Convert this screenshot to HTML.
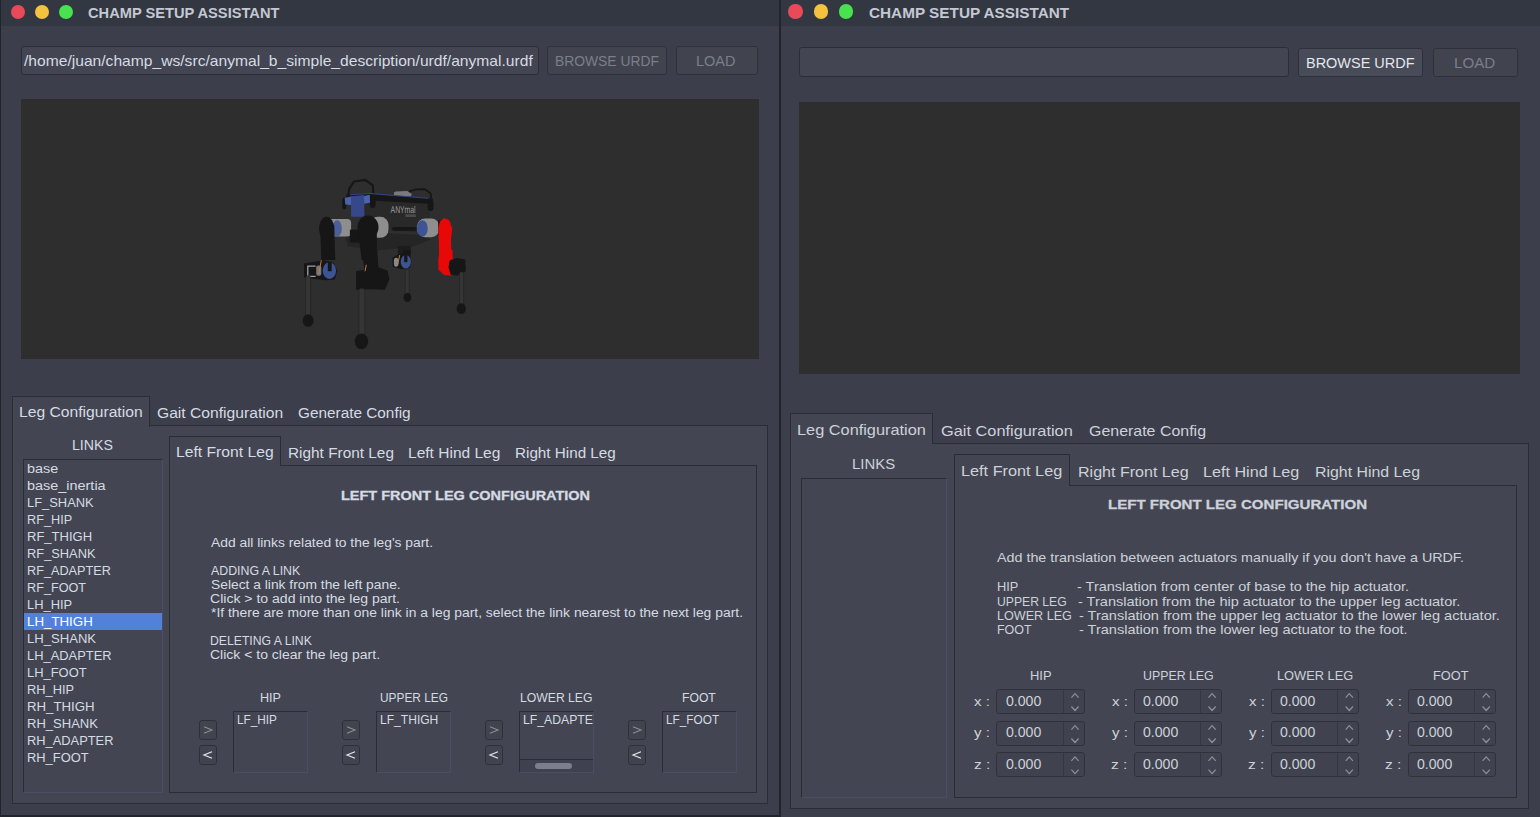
<!DOCTYPE html>
<html><head><meta charset="utf-8"><style>
html,body{margin:0;padding:0;width:1540px;height:817px;overflow:hidden;background:#22242b;}
body{position:relative;font-family:'Liberation Sans', sans-serif;}
div{position:absolute;box-sizing:border-box;}
.t{white-space:pre;transform-origin:0 0;}
</style></head><body>
<div style="left:0px;top:0px;width:779px;height:817px;background:#3c3e4b;"></div>
<div style="left:0px;top:0px;width:779px;height:26px;background:#333741;"></div>
<div style="left:0px;top:0px;width:1px;height:817px;background:#22242b;"></div>
<div style="left:0px;top:815px;width:779px;height:2px;background:#22242b;"></div>
<div style="left:11px;top:5px;width:14px;height:14px;background:#e84a5a;border-radius:50%;"></div>
<div style="left:35px;top:5px;width:14px;height:14px;background:#f3c33f;border-radius:50%;"></div>
<div style="left:59px;top:5px;width:14px;height:14px;background:#48e24f;border-radius:50%;"></div>
<div class="t" style="left:88.04px;top:6.00px;font-size:14px;line-height:14px;color:#c3c8d2;font-weight:bold;transform:scaleX(1.0456);">CHAMP SETUP ASSISTANT</div>
<div style="left:21px;top:46px;width:517.5px;height:28.5px;background:#434652;border:1px solid #2c2e37;border-radius:3px;"></div>
<div class="t" style="left:23.60px;top:53.00px;font-size:15px;line-height:15px;color:#d6dbe3;transform:scaleX(1.0413);">/home/juan/champ_ws/src/anymal_b_simple_description/urdf/anymal.urdf</div>
<div style="left:546.5px;top:46px;width:120px;height:28.5px;background:#41444f;border:1px solid #2f313a;border-radius:3px;"></div>
<div class="t" style="left:554.62px;top:54.00px;font-size:14px;line-height:14px;color:#7b7f8a;transform:scaleX(0.9889);">BROWSE URDF</div>
<div style="left:675.5px;top:46px;width:82px;height:28.5px;background:#41444f;border:1px solid #2f313a;border-radius:3px;"></div>
<div class="t" style="left:696.37px;top:54.00px;font-size:14px;line-height:14px;color:#7b7f8a;transform:scaleX(1.0316);">LOAD</div>
<div style="left:21px;top:99px;width:738px;height:260px;background:#2e2e2e;"></div>
<svg style="position:absolute;left:0;top:0" width="780" height="400" viewBox="0 0 780 400"><path d="M348.2 195.1 L349.3 188.7 L354.0 181.5 L365.1 179.9 L372.7 185.2 L373.5 194.0" fill="none" stroke="#161616" stroke-width="2.2" stroke-linejoin="round"/><path d="M407.8 195.5 L410.1 191.0 L416.0 189.3 L424.7 189.1 L430.6 193.4 L431.2 198.1" fill="none" stroke="#161616" stroke-width="1.8" stroke-linejoin="round"/><polygon points="393.8,192.8 395.5,191.6 407.2,191.0 411.9,194.0 410.7,196.9 394.3,196.3" fill="#7a7a7a" /><polygon points="344.1,230.8 429.4,235.5 429.4,240.1 411.9,247.1 376.8,250.6 347.6,246.0" fill="#252525" /><polygon points="365.1,196.3 429.4,199.8 429.4,230.8 416.6,231.9 365.1,228.4" fill="#292929" /><polygon points="346.4,194.5 369.8,193.4 432.9,198.6 432.9,203.9 369.8,200.6 346.4,199.5" fill="#161616" /><path d="M349.9 194.8 L369.8 193.5 L428.2 198.3" fill="none" stroke="#34467e" stroke-width="1.0" stroke-linejoin="round"/><rect x="342.3" y="197.5" width="4.1" height="11.7" rx="3" fill="#161616" /><rect x="369.8" y="196.3" width="5.8" height="11.7" rx="3" fill="#161616" /><rect x="427.7" y="199.8" width="5.8" height="11.1" rx="3" fill="#161616" /><polygon points="344.7,198.1 351.1,196.6 351.1,205.1 345.3,204.5" fill="#4a63ab" /><polygon points="364.0,195.9 369.8,194.8 370.0,202.7 364.0,203.7" fill="#4a63ab" /><polygon points="350.9,196.3 364.2,195.1 364.2,216.8 351.1,216.8" fill="#37488a" /><text x="390.6" y="212.7" font-family="Liberation Sans" font-size="10" fill="#9c9c9c" textLength="25" lengthAdjust="spacingAndGlyphs" style="text-rendering:geometricPrecision">ANYmal</text><rect x="405.4" y="214.2" width="10.5" height="2.8" rx="0" fill="#4a4a4a" /><rect x="392.0" y="227.0" width="24.5" height="3.7" rx="2" fill="#161616" /><rect x="325.4" y="219.1" width="25.7" height="17.5" rx="4" fill="#8e8e8e" /><rect x="349.9" y="229.6" width="10.5" height="12.9" rx="0" fill="#161616" /><ellipse cx="337.1" cy="228.4" rx="4.7" ry="8.2" fill="#4b5f9a" /><ellipse cx="326.6" cy="228.4" rx="7.6" ry="11.7" fill="#161616" /><rect x="369.8" y="216.8" width="18.7" height="21.0" rx="8" fill="#8e8e8e" /><ellipse cx="368.0" cy="227.3" rx="10.5" ry="11.7" fill="#161616" /><rect x="417.1" y="218.5" width="22.2" height="18.7" rx="8" fill="#8e8e8e" /><rect x="438.2" y="220.3" width="4.1" height="15.2" rx="0" fill="#161616" /><ellipse cx="422.4" cy="228.4" rx="5.3" ry="8.2" fill="#3c5494" /><polygon points="320.1,224.9 334.2,224.9 335.3,260.0 321.3,260.0" fill="#161616" /><polygon points="358.7,235.5 376.8,233.1 376.8,260.0 361.6,260.0" fill="#161616" /><polygon points="397.9,246.0 410.7,246.0 410.7,260.0 397.9,260.0" fill="#1c1c1c" /><polygon points="439.9,221.4 444.0,217.9 449.3,220.3 452.2,228.4 451.0,240.1 451.6,260.0 439.3,260.0 438.8,240.1 438.2,228.4" fill="#e80808" /><polygon points="304.0,263.5 323.3,260.3 333.5,262.8 337.4,270.6 334.8,279.6 324.6,280.2 304.0,277.6" fill="#161616" /><path d="M315.6 266.1 L307.8 266.1 L307.8 276.3 L315.6 276.3" fill="none" stroke="#a0a0a0" stroke-width="1.3" stroke-linejoin="round"/><rect x="316.2" y="265.4" width="5.1" height="10.3" rx="2" fill="#777777" /><ellipse cx="329.4" cy="270.6" rx="6.7" ry="8.4" fill="#3c5494" /><rect x="327.8" y="261.6" width="3.9" height="9.6" rx="0" fill="#161616" /><polygon points="361.8,250.0 377.2,250.0 378.5,268.0 364.4,270.6" fill="#161616" /><polygon points="356.0,271.2 367.0,269.3 378.5,267.3 387.5,270.6 389.4,279.6 384.9,289.8 372.1,289.2 356.0,289.8" fill="#161616" /><polygon points="392.6,257.7 399.1,253.9 408.1,254.5 411.3,261.6 410.0,268.0 401.6,269.3 392.6,266.7" fill="#161616" /><ellipse cx="405.8" cy="261.8" rx="5.1" ry="6.7" fill="#3c5494" /><rect x="404.2" y="255.1" width="3.2" height="7.1" rx="0" fill="#161616" /><rect x="393.9" y="257.7" width="4.5" height="9.0" rx="3" fill="#8a8a8a" /><rect x="402.9" y="250.0" width="7.7" height="5.1" rx="0" fill="#161616" /><polygon points="439.5,250.0 452.4,250.0 453.0,261.6 451.1,275.7 444.0,275.1 438.3,269.3 438.3,260.3" fill="#e80808" /><polygon points="449.8,260.3 456.9,258.0 465.2,259.6 465.9,271.2 456.9,275.7 450.5,274.4 448.5,266.7" fill="#161616" /><rect x="305.5" y="275.7" width="5.1" height="41.1" rx="2" fill="#353535" stroke="#222" stroke-width="0.6"/><rect x="358.9" y="288.5" width="5.9" height="47.5" rx="2" fill="#353535" stroke="#222" stroke-width="0.6"/><rect x="405.2" y="269.3" width="3.9" height="25.1" rx="2" fill="#353535" stroke="#222" stroke-width="0.6"/><rect x="459.5" y="271.8" width="4.1" height="33.4" rx="2" fill="#353535" stroke="#222" stroke-width="0.6"/><rect x="302.7" y="314.2" width="10.9" height="12.6" rx="30" fill="#161616" /><rect x="354.7" y="333.5" width="13.5" height="15.7" rx="35" fill="#161616" /><rect x="403.6" y="293.0" width="7.7" height="9.0" rx="20" fill="#161616" /><rect x="456.6" y="303.3" width="9.3" height="10.7" rx="22" fill="#161616" /><path d="M318.8 273.8 L321.3 260.3" fill="none" stroke="#c27a3e" stroke-width="1" stroke-linejoin="round"/><path d="M365.0 271.2 L366.3 264.8" fill="none" stroke="#c27a3e" stroke-width="1" stroke-linejoin="round"/><path d="M397.8 264.1 L399.7 255.1" fill="none" stroke="#c27a3e" stroke-width="1" stroke-linejoin="round"/></svg>
<div style="left:12px;top:425px;width:756px;height:379px;background:#434652;border:1px solid #2b2d35;"></div>
<div style="left:12px;top:396px;width:138px;height:31px;background:#434652;border:1px solid #2b2d35;border-bottom:none;"></div>
<div class="t" style="left:18.98px;top:405.00px;font-size:14px;line-height:14px;color:#d6dbe3;transform:scaleX(1.1183);">Leg Configuration</div>
<div class="t" style="left:157.37px;top:406.00px;font-size:14px;line-height:14px;color:#d6dbe3;transform:scaleX(1.1176);">Gait Configuration</div>
<div class="t" style="left:298.08px;top:406.00px;font-size:14px;line-height:14px;color:#d6dbe3;transform:scaleX(1.0959);">Generate Config</div>
<div class="t" style="left:72.29px;top:438.00px;font-size:14px;line-height:14px;color:#d6dbe3;transform:scaleX(1.0108);">LINKS</div>
<div style="left:23px;top:459px;width:140px;height:334px;background:#434652;border-top:1px solid #2b2d35;border-left:1px solid #2b2d35;border-right:1px solid #4a4e64;border-bottom:1px solid #4a4e64;"></div>
<div style="left:24px;top:613px;width:138px;height:17px;background:#5181d8;"></div>
<div class="t" style="left:27.10px;top:463.00px;font-size:12.5px;line-height:12.5px;color:#d6dbe3;transform:scaleX(1.1542);">base</div>
<div class="t" style="left:27.10px;top:480.00px;font-size:12.5px;line-height:12.5px;color:#d6dbe3;transform:scaleX(1.1543);">base_inertia</div>
<div class="t" style="left:26.99px;top:497.00px;font-size:12.5px;line-height:12.5px;color:#d6dbe3;transform:scaleX(1.0316);">LF_SHANK</div>
<div class="t" style="left:27.01px;top:514.00px;font-size:12.5px;line-height:12.5px;color:#d6dbe3;transform:scaleX(1.0151);">RF_HIP</div>
<div class="t" style="left:26.98px;top:531.00px;font-size:12.5px;line-height:12.5px;color:#d6dbe3;transform:scaleX(1.0413);">RF_THIGH</div>
<div class="t" style="left:27.00px;top:548.00px;font-size:12.5px;line-height:12.5px;color:#d6dbe3;transform:scaleX(1.0279);">RF_SHANK</div>
<div class="t" style="left:27.01px;top:565.00px;font-size:12.5px;line-height:12.5px;color:#d6dbe3;transform:scaleX(1.0155);">RF_ADAPTER</div>
<div class="t" style="left:27.01px;top:582.00px;font-size:12.5px;line-height:12.5px;color:#d6dbe3;transform:scaleX(1.0133);">RF_FOOT</div>
<div class="t" style="left:26.99px;top:599.00px;font-size:12.5px;line-height:12.5px;color:#d6dbe3;transform:scaleX(1.0315);">LH_HIP</div>
<div class="t" style="left:26.96px;top:616.00px;font-size:12.5px;line-height:12.5px;color:#ffffff;transform:scaleX(1.0632);">LH_THIGH</div>
<div class="t" style="left:26.98px;top:633.00px;font-size:12.5px;line-height:12.5px;color:#d6dbe3;transform:scaleX(1.0464);">LH_SHANK</div>
<div class="t" style="left:26.99px;top:650.00px;font-size:12.5px;line-height:12.5px;color:#d6dbe3;transform:scaleX(1.0315);">LH_ADAPTER</div>
<div class="t" style="left:26.99px;top:667.00px;font-size:12.5px;line-height:12.5px;color:#d6dbe3;transform:scaleX(1.0344);">LH_FOOT</div>
<div class="t" style="left:27.00px;top:684.00px;font-size:12.5px;line-height:12.5px;color:#d6dbe3;transform:scaleX(1.0261);">RH_HIP</div>
<div class="t" style="left:26.97px;top:701.00px;font-size:12.5px;line-height:12.5px;color:#d6dbe3;transform:scaleX(1.0582);">RH_THIGH</div>
<div class="t" style="left:26.98px;top:718.00px;font-size:12.5px;line-height:12.5px;color:#d6dbe3;transform:scaleX(1.0424);">RH_SHANK</div>
<div class="t" style="left:27.00px;top:735.00px;font-size:12.5px;line-height:12.5px;color:#d6dbe3;transform:scaleX(1.0286);">RH_ADAPTER</div>
<div class="t" style="left:26.99px;top:752.00px;font-size:12.5px;line-height:12.5px;color:#d6dbe3;transform:scaleX(1.0302);">RH_FOOT</div>
<div style="left:169px;top:465px;width:588px;height:328px;background:#434652;border:1px solid #2b2d35;"></div>
<div style="left:169px;top:436px;width:112px;height:30px;background:#434652;border:1px solid #2b2d35;border-bottom:none;"></div>
<div class="t" style="left:175.78px;top:445.00px;font-size:14px;line-height:14px;color:#d6dbe3;transform:scaleX(1.1198);">Left Front Leg</div>
<div class="t" style="left:287.80px;top:446.00px;font-size:14px;line-height:14px;color:#d6dbe3;transform:scaleX(1.0981);">Right Front Leg</div>
<div class="t" style="left:407.89px;top:446.00px;font-size:14px;line-height:14px;color:#d6dbe3;transform:scaleX(1.1093);">Left Hind Leg</div>
<div class="t" style="left:514.81px;top:446.00px;font-size:14px;line-height:14px;color:#d6dbe3;transform:scaleX(1.0878);">Right Hind Leg</div>
<div class="t" style="left:340.70px;top:489.00px;font-size:13px;line-height:13px;color:#d6dbe3;font-weight:bold;-webkit-text-stroke:0.3px #d6dbe3;transform:scaleX(1.1137);">LEFT FRONT LEG CONFIGURATION</div>
<div class="t" style="left:211.00px;top:537.00px;font-size:12.5px;line-height:12.5px;color:#d6dbe3;transform:scaleX(1.1080);">Add all links related to the leg's part.</div>
<div class="t" style="left:211.00px;top:565.00px;font-size:12.5px;line-height:12.5px;color:#d6dbe3;transform:scaleX(0.9885);">ADDING A LINK</div>
<div class="t" style="left:210.57px;top:579.00px;font-size:12.5px;line-height:12.5px;color:#d6dbe3;transform:scaleX(1.1052);">Select a link from the left pane.</div>
<div class="t" style="left:210.34px;top:593.00px;font-size:12.5px;line-height:12.5px;color:#d6dbe3;transform:scaleX(1.1231);">Click &gt; to add into the leg part.</div>
<div class="t" style="left:210.78px;top:607.00px;font-size:12.5px;line-height:12.5px;color:#d6dbe3;transform:scaleX(1.1112);">*If there are more than one link in a leg part, select the link nearest to the next leg part.</div>
<div class="t" style="left:210.05px;top:635.00px;font-size:12.5px;line-height:12.5px;color:#d6dbe3;transform:scaleX(0.9773);">DELETING A LINK</div>
<div class="t" style="left:210.34px;top:649.00px;font-size:12.5px;line-height:12.5px;color:#d6dbe3;transform:scaleX(1.1200);">Click &lt; to clear the leg part.</div>
<div class="t" style="left:259.82px;top:692.00px;font-size:12.5px;line-height:12.5px;color:#d6dbe3;transform:scaleX(1.0085);">HIP</div>
<div style="left:233px;top:711px;width:75px;height:62px;background:#434652;border-top:1px solid #2b2d35;border-left:1px solid #2b2d35;border-right:1px solid #4a4e64;border-bottom:1px solid #4a4e64;overflow:hidden;"></div>
<div style="left:234px;top:712px;width:73px;height:46px;overflow:hidden"><div class="t" style="left:3.28px;top:2.00px;font-size:12.5px;line-height:12.5px;color:#d6dbe3;transform:scaleX(0.9419);">LF_HIP</div></div>
<div style="left:199px;top:720px;width:18px;height:20px;background:#41444f;border:1px solid #2f313a;border-radius:3px;"></div>
<div style="left:199px;top:745px;width:18px;height:20px;background:#41444f;border:1px solid #2f313a;border-radius:3px;"></div>
<svg style="position:absolute;left:199px;top:720px" width="18" height="45" viewBox="0 0 18 45"><path d="M5 6.7 L13 10 L5 13.3" fill="none" stroke="#8a8e98" stroke-width="1.1"/><path d="M13 31.7 L5 35 L13 38.3" fill="none" stroke="#e6e9ee" stroke-width="1.2"/></svg>
<div class="t" style="left:379.56px;top:692.00px;font-size:12.5px;line-height:12.5px;color:#d6dbe3;transform:scaleX(0.9494);">UPPER LEG</div>
<div style="left:376px;top:711px;width:75px;height:62px;background:#434652;border-top:1px solid #2b2d35;border-left:1px solid #2b2d35;border-right:1px solid #4a4e64;border-bottom:1px solid #4a4e64;overflow:hidden;"></div>
<div style="left:377px;top:712px;width:73px;height:46px;overflow:hidden"><div class="t" style="left:3.26px;top:2.00px;font-size:12.5px;line-height:12.5px;color:#d6dbe3;transform:scaleX(0.9653);">LF_THIGH</div></div>
<div style="left:342px;top:720px;width:18px;height:20px;background:#41444f;border:1px solid #2f313a;border-radius:3px;"></div>
<div style="left:342px;top:745px;width:18px;height:20px;background:#41444f;border:1px solid #2f313a;border-radius:3px;"></div>
<svg style="position:absolute;left:342px;top:720px" width="18" height="45" viewBox="0 0 18 45"><path d="M5 6.7 L13 10 L5 13.3" fill="none" stroke="#8a8e98" stroke-width="1.1"/><path d="M13 31.7 L5 35 L13 38.3" fill="none" stroke="#e6e9ee" stroke-width="1.2"/></svg>
<div class="t" style="left:520.15px;top:692.00px;font-size:12.5px;line-height:12.5px;color:#d6dbe3;transform:scaleX(0.9750);">LOWER LEG</div>
<div style="left:519px;top:711px;width:75px;height:62px;background:#434652;border-top:1px solid #2b2d35;border-left:1px solid #2b2d35;border-right:1px solid #4a4e64;border-bottom:1px solid #4a4e64;overflow:hidden;"></div>
<div style="left:520px;top:712px;width:73px;height:46px;overflow:hidden"><div class="t" style="left:3.25px;top:2.00px;font-size:12.5px;line-height:12.5px;color:#d6dbe3;transform:scaleX(0.9764);">LF_ADAPTER</div></div>
<div style="left:485px;top:720px;width:18px;height:20px;background:#41444f;border:1px solid #2f313a;border-radius:3px;"></div>
<div style="left:485px;top:745px;width:18px;height:20px;background:#41444f;border:1px solid #2f313a;border-radius:3px;"></div>
<svg style="position:absolute;left:485px;top:720px" width="18" height="45" viewBox="0 0 18 45"><path d="M5 6.7 L13 10 L5 13.3" fill="none" stroke="#8a8e98" stroke-width="1.1"/><path d="M13 31.7 L5 35 L13 38.3" fill="none" stroke="#e6e9ee" stroke-width="1.2"/></svg>
<div class="t" style="left:682.35px;top:692.00px;font-size:12.5px;line-height:12.5px;color:#d6dbe3;transform:scaleX(0.9724);">FOOT</div>
<div style="left:662px;top:711px;width:75px;height:62px;background:#434652;border-top:1px solid #2b2d35;border-left:1px solid #2b2d35;border-right:1px solid #4a4e64;border-bottom:1px solid #4a4e64;overflow:hidden;"></div>
<div style="left:663px;top:712px;width:73px;height:46px;overflow:hidden"><div class="t" style="left:3.28px;top:2.00px;font-size:12.5px;line-height:12.5px;color:#d6dbe3;transform:scaleX(0.9443);">LF_FOOT</div></div>
<div style="left:628px;top:720px;width:18px;height:20px;background:#41444f;border:1px solid #2f313a;border-radius:3px;"></div>
<div style="left:628px;top:745px;width:18px;height:20px;background:#41444f;border:1px solid #2f313a;border-radius:3px;"></div>
<svg style="position:absolute;left:628px;top:720px" width="18" height="45" viewBox="0 0 18 45"><path d="M5 6.7 L13 10 L5 13.3" fill="none" stroke="#8a8e98" stroke-width="1.1"/><path d="M13 31.7 L5 35 L13 38.3" fill="none" stroke="#e6e9ee" stroke-width="1.2"/></svg>
<div style="left:520px;top:759px;width:73px;height:13px;background:#3f424e;border-top:1px solid #2b2d35;"></div>
<div style="left:534.6px;top:763px;width:37.7px;height:6px;background:#7b7f8b;border-radius:3px;"></div>
<div style="left:779px;top:0px;width:2px;height:817px;background:#22242b;"></div>
<div style="left:781px;top:0px;width:759px;height:817px;background:#3c3e4b;"></div>
<div style="left:781px;top:0px;width:759px;height:26px;background:#333741;"></div>
<div style="left:788.35px;top:4.4px;width:14.5px;height:14.5px;background:#e84a5a;border-radius:50%;"></div>
<div style="left:813.75px;top:4.4px;width:14.5px;height:14.5px;background:#f3c33f;border-radius:50%;"></div>
<div style="left:838.55px;top:4.4px;width:14.5px;height:14.5px;background:#48e24f;border-radius:50%;"></div>
<div class="t" style="left:868.92px;top:6.00px;font-size:14.6px;line-height:14.6px;color:#c3c8d2;font-weight:bold;transform:scaleX(1.0491);">CHAMP SETUP ASSISTANT</div>
<div style="left:799px;top:47px;width:490px;height:29.5px;background:#434652;border:1px solid #2c2e37;border-radius:3px;"></div>
<div style="left:1297.5px;top:47.5px;width:125px;height:29px;background:#484b58;border:1px solid #2f313a;border-radius:3px;"></div>
<div class="t" style="left:1305.67px;top:56.00px;font-size:14.6px;line-height:14.6px;color:#e3e7ee;transform:scaleX(0.9918);">BROWSE URDF</div>
<div style="left:1432.5px;top:47.5px;width:85px;height:29px;background:#41444f;border:1px solid #2f313a;border-radius:3px;"></div>
<div class="t" style="left:1454.32px;top:56.00px;font-size:14.6px;line-height:14.6px;color:#7b7f8a;transform:scaleX(1.0364);">LOAD</div>
<div style="left:799px;top:102px;width:721px;height:272px;background:#2e2e2e;"></div>
<div style="left:790px;top:443px;width:739px;height:366px;background:#434652;border:1px solid #2b2d35;"></div>
<div style="left:790px;top:413.4px;width:143.4px;height:31px;background:#434652;border:1px solid #2b2d35;border-bottom:none;"></div>
<div class="t" style="left:797.12px;top:423.00px;font-size:14.6px;line-height:14.6px;color:#cdd1d9;transform:scaleX(1.1183);">Leg Configuration</div>
<div class="t" style="left:941.43px;top:424.00px;font-size:14.6px;line-height:14.6px;color:#cdd1d9;transform:scaleX(1.1199);">Gait Configuration</div>
<div class="t" style="left:1088.65px;top:424.00px;font-size:14.6px;line-height:14.6px;color:#cdd1d9;transform:scaleX(1.0925);">Generate Config</div>
<div class="t" style="left:852.34px;top:457.00px;font-size:14.6px;line-height:14.6px;color:#cdd1d9;transform:scaleX(1.0212);">LINKS</div>
<div style="left:801px;top:478px;width:146px;height:320px;background:#434652;border-top:1px solid #2b2d35;border-left:1px solid #2b2d35;border-right:1px solid #4a4e64;border-bottom:1px solid #4a4e64;"></div>
<div style="left:953.6px;top:485px;width:563.4px;height:312.5px;background:#434652;border:1px solid #2b2d35;"></div>
<div style="left:953.9px;top:453.5px;width:115.8px;height:32.5px;background:#434652;border:1px solid #2b2d35;border-bottom:none;"></div>
<div class="t" style="left:960.93px;top:464.00px;font-size:14.6px;line-height:14.6px;color:#cdd1d9;transform:scaleX(1.1142);">Left Front Leg</div>
<div class="t" style="left:1077.75px;top:465.00px;font-size:14.6px;line-height:14.6px;color:#cdd1d9;transform:scaleX(1.0996);">Right Front Leg</div>
<div class="t" style="left:1203.24px;top:465.00px;font-size:14.6px;line-height:14.6px;color:#cdd1d9;transform:scaleX(1.1073);">Left Hind Leg</div>
<div class="t" style="left:1314.76px;top:465.00px;font-size:14.6px;line-height:14.6px;color:#cdd1d9;transform:scaleX(1.0875);">Right Hind Leg</div>
<div class="t" style="left:1108.16px;top:498.00px;font-size:13.6px;line-height:13.6px;color:#cdd1d9;font-weight:bold;-webkit-text-stroke:0.3px #cdd1d9;transform:scaleX(1.1077);">LEFT FRONT LEG CONFIGURATION</div>
<div class="t" style="left:997.30px;top:551.00px;font-size:13px;line-height:13px;color:#cdd1d9;transform:scaleX(1.1001);">Add the translation between actuators manually if you don't have a URDF.</div>
<div class="t" style="left:997.00px;top:580.00px;font-size:13px;line-height:13px;color:#cdd1d9;transform:scaleX(0.9846);">HIP</div>
<div class="t" style="left:1076.85px;top:580.00px;font-size:13px;line-height:13px;color:#cdd1d9;transform:scaleX(1.1152);">- Translation from center of base to the hip actuator.</div>
<div class="t" style="left:997.24px;top:595.00px;font-size:13px;line-height:13px;color:#cdd1d9;transform:scaleX(0.9363);">UPPER LEG</div>
<div class="t" style="left:1078.25px;top:595.00px;font-size:13px;line-height:13px;color:#cdd1d9;transform:scaleX(1.1185);">- Translation from the hip actuator to the upper leg actuator.</div>
<div class="t" style="left:997.02px;top:609.00px;font-size:13px;line-height:13px;color:#cdd1d9;transform:scaleX(0.9693);">LOWER LEG</div>
<div class="t" style="left:1079.15px;top:609.00px;font-size:13px;line-height:13px;color:#cdd1d9;transform:scaleX(1.1177);">- Translation from the upper leg actuator to the lower leg actuator.</div>
<div class="t" style="left:997.03px;top:623.00px;font-size:13px;line-height:13px;color:#cdd1d9;transform:scaleX(0.9579);">FOOT</div>
<div class="t" style="left:1079.15px;top:623.00px;font-size:13px;line-height:13px;color:#cdd1d9;transform:scaleX(1.1173);">- Translation from the lower leg actuator to the foot.</div>
<div class="t" style="left:1030.39px;top:669.00px;font-size:13px;line-height:13px;color:#cdd1d9;transform:scaleX(0.9946);">HIP</div>
<div class="t" style="left:974.40px;top:695.00px;font-size:13px;line-height:13px;color:#cdd1d9;transform:scaleX(1.1554);">x :</div>
<div style="left:996.4px;top:689.3px;width:88.6px;height:24.8px;background:#40434f;border:1px solid #30323b;border-radius:3px;"></div>
<div style="left:1062.9px;top:690.3px;width:1px;height:23px;background:#353740;"></div>
<div class="t" style="left:1005.96px;top:694.00px;font-size:14.6px;line-height:14.6px;color:#cdd1d9;transform:scaleX(0.9660);">0.000</div>
<div class="t" style="left:974.40px;top:726.00px;font-size:13px;line-height:13px;color:#cdd1d9;transform:scaleX(1.1554);">y :</div>
<div style="left:996.4px;top:721.3px;width:88.6px;height:24.8px;background:#40434f;border:1px solid #30323b;border-radius:3px;"></div>
<div style="left:1062.9px;top:722.3px;width:1px;height:23px;background:#353740;"></div>
<div class="t" style="left:1005.96px;top:725.00px;font-size:14.6px;line-height:14.6px;color:#cdd1d9;transform:scaleX(0.9660);">0.000</div>
<div class="t" style="left:973.91px;top:758.00px;font-size:13px;line-height:13px;color:#cdd1d9;transform:scaleX(1.1941);">z :</div>
<div style="left:996.4px;top:752.4px;width:88.6px;height:24.8px;background:#40434f;border:1px solid #30323b;border-radius:3px;"></div>
<div style="left:1062.9px;top:753.4px;width:1px;height:23px;background:#353740;"></div>
<div class="t" style="left:1005.96px;top:757.00px;font-size:14.6px;line-height:14.6px;color:#cdd1d9;transform:scaleX(0.9660);">0.000</div>
<div class="t" style="left:1142.73px;top:669.00px;font-size:13px;line-height:13px;color:#cdd1d9;transform:scaleX(0.9500);">UPPER LEG</div>
<div class="t" style="left:1111.50px;top:695.00px;font-size:13px;line-height:13px;color:#cdd1d9;transform:scaleX(1.1554);">x :</div>
<div style="left:1133.5px;top:689.3px;width:88.6px;height:24.8px;background:#40434f;border:1px solid #30323b;border-radius:3px;"></div>
<div style="left:1200.0px;top:690.3px;width:1px;height:23px;background:#353740;"></div>
<div class="t" style="left:1143.06px;top:694.00px;font-size:14.6px;line-height:14.6px;color:#cdd1d9;transform:scaleX(0.9660);">0.000</div>
<div class="t" style="left:1111.50px;top:726.00px;font-size:13px;line-height:13px;color:#cdd1d9;transform:scaleX(1.1554);">y :</div>
<div style="left:1133.5px;top:721.3px;width:88.6px;height:24.8px;background:#40434f;border:1px solid #30323b;border-radius:3px;"></div>
<div style="left:1200.0px;top:722.3px;width:1px;height:23px;background:#353740;"></div>
<div class="t" style="left:1143.06px;top:725.00px;font-size:14.6px;line-height:14.6px;color:#cdd1d9;transform:scaleX(0.9660);">0.000</div>
<div class="t" style="left:1111.01px;top:758.00px;font-size:13px;line-height:13px;color:#cdd1d9;transform:scaleX(1.1941);">z :</div>
<div style="left:1133.5px;top:752.4px;width:88.6px;height:24.8px;background:#40434f;border:1px solid #30323b;border-radius:3px;"></div>
<div style="left:1200.0px;top:753.4px;width:1px;height:23px;background:#353740;"></div>
<div class="t" style="left:1143.06px;top:757.00px;font-size:14.6px;line-height:14.6px;color:#cdd1d9;transform:scaleX(0.9660);">0.000</div>
<div class="t" style="left:1276.80px;top:669.00px;font-size:13px;line-height:13px;color:#cdd1d9;transform:scaleX(0.9853);">LOWER LEG</div>
<div class="t" style="left:1248.70px;top:695.00px;font-size:13px;line-height:13px;color:#cdd1d9;transform:scaleX(1.1554);">x :</div>
<div style="left:1270.7px;top:689.3px;width:88.6px;height:24.8px;background:#40434f;border:1px solid #30323b;border-radius:3px;"></div>
<div style="left:1337.2px;top:690.3px;width:1px;height:23px;background:#353740;"></div>
<div class="t" style="left:1280.26px;top:694.00px;font-size:14.6px;line-height:14.6px;color:#cdd1d9;transform:scaleX(0.9660);">0.000</div>
<div class="t" style="left:1248.70px;top:726.00px;font-size:13px;line-height:13px;color:#cdd1d9;transform:scaleX(1.1554);">y :</div>
<div style="left:1270.7px;top:721.3px;width:88.6px;height:24.8px;background:#40434f;border:1px solid #30323b;border-radius:3px;"></div>
<div style="left:1337.2px;top:722.3px;width:1px;height:23px;background:#353740;"></div>
<div class="t" style="left:1280.26px;top:725.00px;font-size:14.6px;line-height:14.6px;color:#cdd1d9;transform:scaleX(0.9660);">0.000</div>
<div class="t" style="left:1248.21px;top:758.00px;font-size:13px;line-height:13px;color:#cdd1d9;transform:scaleX(1.1941);">z :</div>
<div style="left:1270.7px;top:752.4px;width:88.6px;height:24.8px;background:#40434f;border:1px solid #30323b;border-radius:3px;"></div>
<div style="left:1337.2px;top:753.4px;width:1px;height:23px;background:#353740;"></div>
<div class="t" style="left:1280.26px;top:757.00px;font-size:14.6px;line-height:14.6px;color:#cdd1d9;transform:scaleX(0.9660);">0.000</div>
<div class="t" style="left:1433.20px;top:669.00px;font-size:13px;line-height:13px;color:#cdd1d9;transform:scaleX(0.9837);">FOOT</div>
<div class="t" style="left:1385.60px;top:695.00px;font-size:13px;line-height:13px;color:#cdd1d9;transform:scaleX(1.1554);">x :</div>
<div style="left:1407.6px;top:689.3px;width:88.6px;height:24.8px;background:#40434f;border:1px solid #30323b;border-radius:3px;"></div>
<div style="left:1474.1px;top:690.3px;width:1px;height:23px;background:#353740;"></div>
<div class="t" style="left:1417.16px;top:694.00px;font-size:14.6px;line-height:14.6px;color:#cdd1d9;transform:scaleX(0.9660);">0.000</div>
<div class="t" style="left:1385.60px;top:726.00px;font-size:13px;line-height:13px;color:#cdd1d9;transform:scaleX(1.1554);">y :</div>
<div style="left:1407.6px;top:721.3px;width:88.6px;height:24.8px;background:#40434f;border:1px solid #30323b;border-radius:3px;"></div>
<div style="left:1474.1px;top:722.3px;width:1px;height:23px;background:#353740;"></div>
<div class="t" style="left:1417.16px;top:725.00px;font-size:14.6px;line-height:14.6px;color:#cdd1d9;transform:scaleX(0.9660);">0.000</div>
<div class="t" style="left:1385.11px;top:758.00px;font-size:13px;line-height:13px;color:#cdd1d9;transform:scaleX(1.1941);">z :</div>
<div style="left:1407.6px;top:752.4px;width:88.6px;height:24.8px;background:#40434f;border:1px solid #30323b;border-radius:3px;"></div>
<div style="left:1474.1px;top:753.4px;width:1px;height:23px;background:#353740;"></div>
<div class="t" style="left:1417.16px;top:757.00px;font-size:14.6px;line-height:14.6px;color:#cdd1d9;transform:scaleX(0.9660);">0.000</div>
<svg style="position:absolute;left:0;top:0" width="1540" height="817"><path d="M1071.4 697.7 L1075.0 693.7 L1078.6 697.7 M1071.4 706.5 L1075.0 710.5 L1078.6 706.5 M1071.4 729.7 L1075.0 725.7 L1078.6 729.7 M1071.4 738.5 L1075.0 742.5 L1078.6 738.5 M1071.4 760.8 L1075.0 756.8 L1078.6 760.8 M1071.4 769.6 L1075.0 773.6 L1078.6 769.6 M1208.5 697.7 L1212.1 693.7 L1215.7 697.7 M1208.5 706.5 L1212.1 710.5 L1215.7 706.5 M1208.5 729.7 L1212.1 725.7 L1215.7 729.7 M1208.5 738.5 L1212.1 742.5 L1215.7 738.5 M1208.5 760.8 L1212.1 756.8 L1215.7 760.8 M1208.5 769.6 L1212.1 773.6 L1215.7 769.6 M1345.7 697.7 L1349.3 693.7 L1352.9 697.7 M1345.7 706.5 L1349.3 710.5 L1352.9 706.5 M1345.7 729.7 L1349.3 725.7 L1352.9 729.7 M1345.7 738.5 L1349.3 742.5 L1352.9 738.5 M1345.7 760.8 L1349.3 756.8 L1352.9 760.8 M1345.7 769.6 L1349.3 773.6 L1352.9 769.6 M1482.6 697.7 L1486.2 693.7 L1489.8 697.7 M1482.6 706.5 L1486.2 710.5 L1489.8 706.5 M1482.6 729.7 L1486.2 725.7 L1489.8 729.7 M1482.6 738.5 L1486.2 742.5 L1489.8 738.5 M1482.6 760.8 L1486.2 756.8 L1489.8 760.8 M1482.6 769.6 L1486.2 773.6 L1489.8 769.6" fill="none" stroke="#8c909b" stroke-width="1.2"/></svg>
</body></html>
